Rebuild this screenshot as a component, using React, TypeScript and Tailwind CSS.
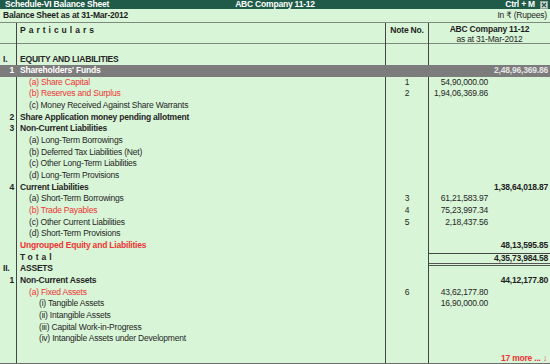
type Row = {
  no?: string;
  label: string;
  level?: 0 | 1 | 2;
  bold?: boolean;
  red?: boolean;
  spaced?: boolean;
  note?: string;
  amount?: string;
  total?: string;
  highlight?: boolean;
  grandTotal?: boolean;
};

const rows: Row[] = [
  { no: "I.", label: "EQUITY AND LIABILITIES", bold: true, level: 0 },
  { no: "1", label: "Shareholders' Funds", bold: true, highlight: true, total: "2,48,96,369.86" },
  { label: "(a) Share Capital", level: 1, red: true, note: "1", amount: "54,90,000.00" },
  { label: "(b) Reserves and Surplus", level: 1, red: true, note: "2", amount: "1,94,06,369.86" },
  { label: "(c) Money Received Against Share Warrants", level: 1 },
  { no: "2", label: "Share Application money pending allotment", bold: true },
  { no: "3", label: "Non-Current Liabilities", bold: true },
  { label: "(a) Long-Term Borrowings", level: 1 },
  { label: "(b) Deferred Tax Liabilities (Net)", level: 1 },
  { label: "(c) Other Long-Term Liabilities", level: 1 },
  { label: "(d) Long-Term Provisions", level: 1 },
  { no: "4", label: "Current Liabilities", bold: true, total: "1,38,64,018.87" },
  { label: "(a) Short-Term Borrowings", level: 1, note: "3", amount: "61,21,583.97" },
  { label: "(b) Trade Payables", level: 1, red: true, note: "4", amount: "75,23,997.34" },
  { label: "(c) Other Current Liabilities", level: 1, note: "5", amount: "2,18,437.56" },
  { label: "(d) Short-Term Provisions", level: 1 },
  { label: "Ungrouped Equity and Liabilities", bold: true, red: true, total: "48,13,595.85" },
  { label: "Total", bold: true, spaced: true, total: "4,35,73,984.58", grandTotal: true },
  { no: "II.", label: "ASSETS", bold: true },
  { no: "1", label: "Non-Current Assets", bold: true, total: "44,12,177.80" },
  { label: "(a) Fixed Assets", level: 1, red: true, note: "6", amount: "43,62,177.80" },
  { label: "(i) Tangible Assets", level: 2, amount: "16,90,000.00" },
  { label: "(ii) Intangible Assets", level: 2 },
  { label: "(iii) Capital Work-in-Progress", level: 2 },
  { label: "(iv) Intangible Assets under Development", level: 2 },
];

const indent = ["pl-[3px]", "pl-[12px]", "pl-[22px]"];

function LineItem({ row }: { row: Row }) {
  const hl = row.highlight;
  const textColor = hl ? "text-white" : row.red ? "text-[#ee3434]" : "text-[#262626]";
  const lineColor = hl ? "border-[#7c7c7c]" : "border-[#454545]";
  return (
    <div
      className={`grid grid-cols-[16px_369px_43px_122px] h-[11.67px] leading-[11.67px] ${
        hl ? "bg-[#7c7c7c]" : ""
      }`}
    >
      <div
        className={`pr-[2px] whitespace-nowrap ${row.no?.includes(".") ? "text-left pl-[3px]" : "text-right"} font-bold ${
          hl ? "text-white" : "text-[#262626]"
        }`}
      >
        {row.no}
      </div>
      <div
        className={`border-l ${lineColor} ${indent[row.level ?? 0]} whitespace-nowrap ${textColor} ${
          row.bold ? "font-bold" : ""
        } ${row.spaced ? "tracking-[3px]" : ""}`}
      >
        {row.label}
      </div>
      <div className={`border-l ${lineColor} text-center text-[#262626]`}>{row.note}</div>
      {row.grandTotal ? (
        <div className={`border-l ${lineColor}`}>
          <div className="mt-[1.5px] h-[12.5px] border-t border-[#454545] border-b-[3px] border-b-[#555] border-double text-right pr-[2px] leading-[9px] font-bold text-[#1e1e1e]">
            {row.total}
          </div>
        </div>
      ) : (
        <div className={`border-l ${lineColor} flex`}>
          <div className="w-[59px] text-right text-[#262626]">{row.amount}</div>
          <div
            className={`flex-1 text-right pr-[2px] font-bold ${
              hl ? "text-[#e6e6e6]" : "text-[#1e1e1e]"
            }`}
          >
            {row.total}
          </div>
        </div>
      )}
    </div>
  );
}

export default function App() {
  return (
    <div className="w-[550px] h-[364px] overflow-hidden flex flex-col bg-[#d9f5d7] text-[8.5px] tracking-[-0.2px] font-['Liberation_Sans','DejaVu_Sans',Arial,sans-serif]">
      {/* title bar */}
      <div className="h-[9px] bg-[#1f5b48] text-white font-bold leading-[9px] flex items-center px-[5px]">
        <span className="flex-1">Schedule-VI Balance Sheet</span>
        <span className="flex-1 text-center">ABC Company 11-12</span>
        <span className="flex-1 flex justify-end items-center gap-[5px]">
          <span>Ctrl + M</span>
          <svg width="8" height="8" viewBox="0 0 8 8" className="-mr-[3px]">
            <rect x="0.5" y="0.5" width="7" height="7" fill="#cfd8d3" stroke="#9aa7a0" />
            <path d="M2 2 L6 6 M6 2 L2 6" stroke="#1f5b48" strokeWidth="1.2" />
          </svg>
        </span>
      </div>

      {/* report heading */}
      <div className="h-[14px] flex items-center justify-between px-[3px] border-b border-[#7d8a7d] text-[#1e1e1e]">
        <span className="font-bold">Balance Sheet as at 31-Mar-2012</span>
        <span>In ₹ (Rupees)</span>
      </div>

      {/* column headers */}
      <div className="grid grid-cols-[16px_369px_43px_122px] h-[21px] border-b border-[#7d8a7d] text-[#1e1e1e] font-bold">
        <div />
        <div className="border-l border-[#454545] pl-[3px] pt-[1px] tracking-[3px]">Particulars</div>
        <div className="border-l border-[#454545] pt-[1px] text-center">Note No.</div>
        <div className="border-l border-[#454545] pt-[1px] text-center leading-[10px]">
          <div>ABC Company 11-12</div>
          <div className="font-normal">as at 31-Mar-2012</div>
        </div>
      </div>

      {/* body */}
      <div className="flex-1 flex flex-col border-b border-[#6d6d6d]">
        <div className="grid grid-cols-[16px_369px_43px_122px] h-[9.5px] shrink-0">
          <div />
          <div className="border-l border-[#454545]" />
          <div className="border-l border-[#454545]" />
          <div className="border-l border-[#454545]" />
        </div>
        {rows.map((r, i) => (
          <LineItem key={i} row={r} />
        ))}
        <div className="flex-1 grid grid-cols-[16px_369px_43px_122px]">
          <div />
          <div className="border-l border-[#454545]" />
          <div className="border-l border-[#454545]" />
          <div className="border-l border-[#454545] flex items-end justify-end pr-[3px] leading-[10px] font-bold text-[#ee3434]">
            17 more ... ↓
          </div>
        </div>
      </div>
    </div>
  );
}
